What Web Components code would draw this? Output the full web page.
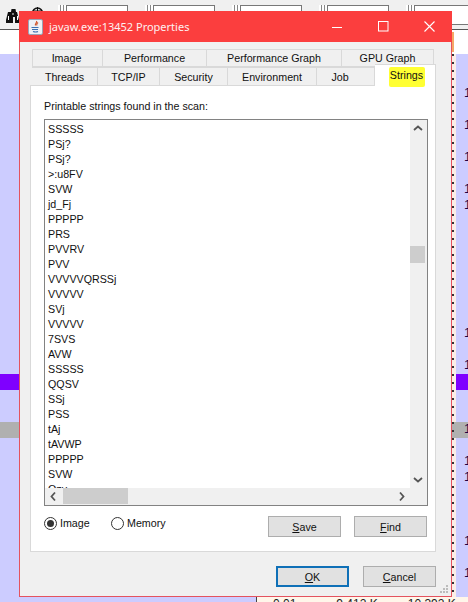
<!DOCTYPE html>
<html>
<head>
<meta charset="utf-8">
<title>javaw.exe:13452 Properties</title>
<style>
  html, body { margin: 0; padding: 0; height: 100%; overflow: hidden; background: #ccccff; }
  body { font-family: "Liberation Sans", Arial, sans-serif; font-size: 10.7px; color: #111; }
</style>
</head>
<body>
<proc-desktop>
  <proc-window title="javaw.exe:13452 Properties">
    <prop-tabs>
      <prop-tab slot="top" style="width:71px;padding-right:2px">Image</prop-tab>
      <prop-tab slot="top" style="width:104px">Performance</prop-tab>
      <prop-tab slot="top" style="width:135px">Performance Graph</prop-tab>
      <prop-tab slot="top" style="width:92px">GPU Graph</prop-tab>
      <prop-tab slot="bottom" style="width:66px">Threads</prop-tab>
      <prop-tab slot="bottom" style="width:62px">TCP/IP</prop-tab>
      <prop-tab slot="bottom" style="width:68px">Security</prop-tab>
      <prop-tab slot="bottom" style="width:89px">Environment</prop-tab>
      <prop-tab slot="bottom" style="width:58px;padding-right:11px">Job</prop-tab>
      <prop-tab slot="bottom" style="width:61px" active>Strings</prop-tab>
      <strings-panel></strings-panel>
    </prop-tabs>
    <win-button slot="footer" default key="O" rest="K"></win-button>
    <win-button slot="footer" key="C" rest="ancel"></win-button>
  </proc-window>
</proc-desktop>

<script>
// background process list, the dialog sits on top of it
class ProcDesktop extends HTMLElement {
  constructor() {
    super();
    const numbered = [2, 4, 6, 8, 9, 17, 19, 23, 25, 26, 30, 32];
    let rows = '';
    for (let i = 0; i < 34; i++) {
      let cls = 'row';
      if (i === 20) cls += ' purple';
      if (i === 23) cls += ' gray';
      rows += `<div class="${cls}">${numbered.includes(i) ? '<span>1</span>' : ''}</div>`;
    }
    let tools = '';
    for (let i = 0; i < 5; i++) tools += '<i class="grip"></i><b class="field"></b>';
    this.attachShadow({mode: 'open'}).innerHTML = `
      <style>
        :host { display: block; position: relative; width: 468px; height: 602px; overflow: hidden; background: #ccccff; }
        .toolbar { height: 30px; background: #f0f0f0; border-bottom: 1px solid #555; display: flex; padding: 5px 0 0 58px; box-sizing: border-box; width: 100%; }
        .grip { width: 8px; flex: none; height: 6px; background: repeating-linear-gradient(90deg, #fff 0 2px, #888 2px 3px); }
        .field { width: 62px; height: 20px; margin: 0 17px 0 0; flex: none; background: #fff; border: 1px solid #777; box-sizing: border-box; }
        .field:last-child { margin-right: 0; }
        .head { height: 24px; background: #fff; }
        .row { height: 16px; padding-left: 464px; font: 13px/13px "Liberation Sans", sans-serif; color: #220044; box-sizing: border-box; }
        .row span { display: block; }
        .purple { background: #7f00ff; }
        .gray { background: #b0b0b0; }
        .tail { height: 8px; margin-top: -1px; margin-left: 256px; background: #fff6ea; border-left: 1px solid #444; display: flex; font: 12px/11px "Liberation Sans", sans-serif; padding-top: 2px; color: #222; }
        .binoculars { position: absolute; left: 6px; top: 8px; }
        .globe { position: absolute; left: 31px; top: 7px; }
        .strip, .strip i { background-image: repeating-linear-gradient(180deg, #333 0 2px, transparent 2px 8px); background-size: 2px 100%; background-repeat: no-repeat; }
        .strip { position: absolute; left: 452px; top: 54px; width: 4px; height: 543px; background-color: #fbeee6; }
        .strip i { position: absolute; left: 0; top: 368px; width: 4px; height: 16px; background-color: #b0b0b0; }
        .orange { position: absolute; left: 452px; top: 32px; width: 2px; height: 20px; background: #f5a866; }
        ::slotted(proc-window) { position: absolute; left: 19px; top: 11px; }
      </style>
      <div class="toolbar">${tools}</div>
      <div class="head"></div>
      ${rows}
      <div class="tail"><span style="margin-left:16px">0.01</span><span style="margin-left:40px">9,412 K</span><span style="margin-left:30px">10,392 K</span></div>
      <svg class="binoculars" width="14" height="16" viewBox="0 0 14 16">
        <path fill="#111" d="M2 4h3l.5-3h2v4h-1v2h1V1h2l.5 3h1l2 8v3H9V9H7v6H0v-3z"/>
        <path fill="#fff" d="M2 8h1v4H2zM11 8h1v4h-1z"/>
      </svg>
      <svg class="globe" width="14" height="6" viewBox="0 0 14 6">
        <circle cx="6.500" cy="6" r="5" fill="#ddd" stroke="#111" stroke-width="1.500"/>
        <path d="M6.500 0v6M2 4h9" stroke="#111"/>
      </svg>
      <div class="orange"></div>
      <div class="strip"><i></i></div>
      <slot></slot>
    `;
  }
}

class ProcWindow extends HTMLElement {
  constructor() {
    super();
    this.attachShadow({mode: 'open'}).innerHTML = `
      <style>
        :host { display: flex; flex-direction: column; width: 433px; height: 586px; box-sizing: border-box; background: #f0f0f0; border: 1px solid #e4535f; border-top: 0; position: relative; }
        .bar { height: 31px; flex: none; margin: 0 -1px; background: #fb3e3e; display: flex; align-items: center; color: #fff; font: 11px "Noto Sans", sans-serif; }
        .icon { margin: 0 6px 0 9px; flex: none; }
        .name { flex: 1; white-space: nowrap; opacity: .93; }
        .ctl { width: 46px; height: 31px; display: flex; align-items: center; justify-content: center; flex: none; }
        .body { flex: 1; padding: 7px 15px 0 10px; display: flex; flex-direction: column; }
        .foot { display: flex; justify-content: flex-end; gap: 14px; padding: 14px 0 0; }
        .size { position: absolute; right: 2px; bottom: 2px; }
      </style>
      <div class="bar">
        <svg class="icon" width="15" height="16" viewBox="0 0 15 16">
          <rect x=".5" y=".5" width="14" height="15" rx="1.500" fill="#eef0f5" stroke="#9aa3b5"/>
          <path d="M8.500 2c1 1.500-2 2.500-1 4.500M10 3.500c-1 1-2 1.500-1 3" fill="none" stroke="#d2562c" stroke-width="1.200"/>
          <path d="M3.500 8.500h7M4 10.500h6M5 12.500c2 .7 3.500.7 5 0" fill="none" stroke="#3c6fb0" stroke-width="1.200"/>
        </svg>
        <span class="name"></span>
        <span class="ctl"><svg width="11" height="11"><path d="M0 6.500h10" stroke="#fff"/></svg></span>
        <span class="ctl"><svg width="11" height="11"><rect x=".5" y=".5" width="9.500" height="9.500" fill="none" stroke="#fff"/></svg></span>
        <span class="ctl"><svg width="11" height="11"><path d="M.5.500l10 10M10.500.500l-10 10" stroke="#fff" stroke-width="1.100"/></svg></span>
      </div>
      <div class="body">
        <slot></slot>
        <div class="foot"><slot name="footer"></slot></div>
      </div>
      <svg class="size" width="10" height="10" viewBox="0 0 10 10">
        <path fill="#bcbcbc" d="M7 1h2v2H7zM4 4h2v2H4zM7 4h2v2H7zM1 7h2v2H1zM4 7h2v2H4zM7 7h2v2H7z"/>
      </svg>
    `;
    this.shadowRoot.querySelector('.name').textContent = this.getAttribute('title');
    this.removeAttribute('title');
  }
}

class PropTabs extends HTMLElement {
  constructor() {
    super();
    this.attachShadow({mode: 'open'}).innerHTML = `
      <style>
        :host { display: flex; flex-direction: column; height: 503px; flex: none; }
        .line { display: flex; height: 18px; padding-left: 2px; flex: none; align-items: flex-end; }
        .line.low { height: 19px; position: relative; z-index: 1; margin-bottom: -1px; }
        .panel { flex: 1; background: #fff; border: 1px solid #d9d9d9; min-height: 0; display: flex; }
        ::slotted(prop-tab:first-child) { border-left-width: 1px; }
      </style>
      <div class="line"><slot name="top"></slot></div>
      <div class="line low"><slot name="bottom"></slot></div>
      <div class="panel"><slot></slot></div>
    `;
  }
}

class PropTab extends HTMLElement {
  constructor() {
    super();
    this.attachShadow({mode: 'open'}).innerHTML = `
      <style>
        :host { display: flex; align-items: center; justify-content: center; box-sizing: border-box; height: 100%; flex: none; background: #f0f0f0; border: 1px solid #d9d9d9; border-left-width: 0; white-space: nowrap; line-height: 16px; }
        :host([active]) { background: #fff; height: 22px; border-bottom: 0; position: relative; }
        :host([active]) span { background: #ffff33; padding: 0 0 4px; margin-left: 3px; width: 36px; text-align: center; border-radius: 2px; display: block; position: relative; top: 1px; }
      </style>
      <span><slot></slot></span>
    `;
  }
}

class StringsPanel extends HTMLElement {
  constructor() {
    super();
    this.attachShadow({mode: 'open'}).innerHTML = `
      <style>
        :host { display: flex; flex-direction: column; flex: 1; padding: 12px 8px 0 13px; min-width: 0; }
        .label { height: 21px; line-height: 16px; flex: none; }
        .row { display: flex; flex: none; height: 31px; align-items: flex-start; margin-top: 10px; }
        .radios { display: grid; grid-template-columns: 67px auto; flex: 1; justify-content: start; padding-top: 1px; }
        .btns { display: flex; gap: 13px; }
      </style>
      <div class="label">Printable strings found in the scan:</div>
      <string-list></string-list>
      <div class="row">
        <div class="radios">
          <win-radio checked>Image</win-radio>
          <win-radio>Memory</win-radio>
        </div>
        <div class="btns">
          <win-button key="S" rest="ave"></win-button>
          <win-button key="F" rest="ind"></win-button>
        </div>
      </div>
    `;
  }
}

class StringList extends HTMLElement {
  constructor() {
    super();
    const items = ['SSSSS','PSj?','PSj?','>:u8FV','SVW','jd_Fj','PPPPP','PRS','PVVRV','PVV','VVVVVQRSSj','VVVVV','SVj','VVVVV','7SVS','AVW','SSSSS','QQSV','SSj','PSS','tAj','tAVWP','PPPPP','SVW','Qzv'];
    this.attachShadow({mode: 'open'}).innerHTML = `
      <style>
        :host { display: grid; grid-template-columns: 1fr 17px; grid-template-rows: 1fr 17px; width: 384px; height: 387px; box-sizing: border-box; border: 1px solid #828282; background: #fff; flex: none; }
        .items { overflow: hidden; padding: 2px 0 0 3px; min-height: 0; }
        .items div { height: 15px; line-height: 15px; white-space: nowrap; }
        .v { background: #f0f0f0; position: relative; display: flex; flex-direction: column; align-items: center; min-height: 0; }
        .h { background: #f0f0f0; display: flex; align-items: center; }
        .corner { background: #f0f0f0; }
        .thumb-v { width: 15px; margin: 109px 2px 0 0; height: 17px; background: #cdcdcd; }
        .thumb-h { width: 65px; height: 16px; margin-left: 1px; margin-top: -1px; background: #cdcdcd; }
        .arrow { flex: none; width: 17px; height: 17px; display: block; }
        .grow { flex: 1; }
      </style>
      <div class="items">${items.map(s => `<div>${s.replace('>', '&gt;')}</div>`).join('')}</div>
      <div class="v">
        <svg class="arrow" viewBox="0 0 17 17"><path d="M4 10l4-3.500 4 3.500" fill="none" stroke="#555" stroke-width="1.800"/></svg>
        <div class="thumb-v"></div>
        <div class="grow"></div>
        <svg class="arrow" viewBox="0 0 17 17"><path d="M4 7l4 3.500 4-3.500" fill="none" stroke="#555" stroke-width="1.800"/></svg>
      </div>
      <div class="h">
        <svg class="arrow" viewBox="0 0 17 17"><path d="M10 4.500L6.500 8.500l3.500 4" fill="none" stroke="#555" stroke-width="1.800"/></svg>
        <div class="thumb-h"></div>
        <div class="grow"></div>
        <svg class="arrow" viewBox="0 0 17 17"><path d="M7 4.500l3.500 4-3.500 4" fill="none" stroke="#555" stroke-width="1.800"/></svg>
      </div>
      <div class="corner"></div>
    `;
  }
}

class WinRadio extends HTMLElement {
  constructor() {
    super();
    this.attachShadow({mode: 'open'}).innerHTML = `
      <style>
        :host { display: inline-flex; align-items: center; gap: 3px; height: 13px; line-height: 13px; }
        .dot { width: 13px; height: 13px; box-sizing: border-box; border: 1px solid #333; border-radius: 50%; background: #fff; display: flex; align-items: center; justify-content: center; }
        :host([checked]) .dot::after { content: ""; width: 7px; height: 7px; border-radius: 50%; background: #333; }
      </style>
      <span class="dot"></span><slot></slot>
    `;
  }
}

class WinButton extends HTMLElement {
  constructor() {
    super();
    this.attachShadow({mode: 'open'}).innerHTML = `
      <style>
        :host { display: flex; align-items: center; justify-content: center; width: 73px; height: 21px; box-sizing: border-box; background: #e1e1e1; border: 1px solid #adadad; }
        :host([default]) { border: 2px solid #0f70b7; }
      </style>
      <span><u></u><span class="rest"></span></span>
    `;
    this.shadowRoot.querySelector('u').textContent = this.getAttribute('key');
    this.shadowRoot.querySelector('.rest').textContent = this.getAttribute('rest');
  }
}

customElements.define('proc-desktop', ProcDesktop);
customElements.define('proc-window', ProcWindow);
customElements.define('prop-tabs', PropTabs);
customElements.define('prop-tab', PropTab);
customElements.define('strings-panel', StringsPanel);
customElements.define('string-list', StringList);
customElements.define('win-radio', WinRadio);
customElements.define('win-button', WinButton);
</script>
</body>
</html>
